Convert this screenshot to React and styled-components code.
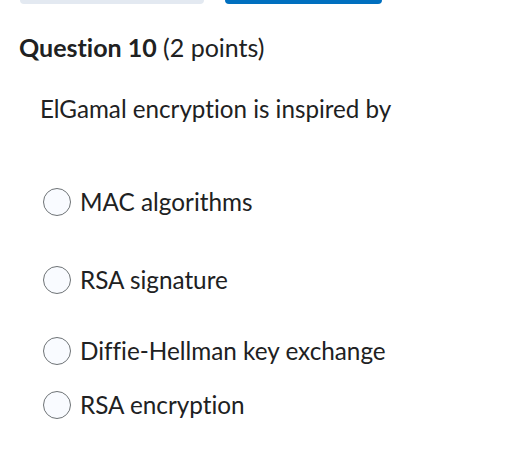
import React from "react";
import styled, { createGlobalStyle } from "styled-components";

const Global = createGlobalStyle`
  body {
    margin: 0;
    background: #ffffff;
    font-family: Lato, "Noto Sans", sans-serif;
    color: #202122;
    font-variant-ligatures: none;
  }
`;

const Page = styled.div`
  width: 525px;
  height: 456px;
  overflow: hidden;
`;

const ButtonRow = styled.div`
  display: flex;
  gap: 21px;
  padding-left: 20px;
`;

const TopButton = styled.div`
  width: ${(p) => p.w}px;
  height: 4px;
  background: ${(p) => (p.primary ? "#006fbf" : "#e3e9f1")};
  border-radius: 0 0 6px 6px;
`;

const Title = styled.h2`
  margin: 27px 0 0 19px;
  font-size: 25px;
  line-height: 32px;
  font-weight: 400;
  b {
    font-weight: 700;
  }
`;

const Prompt = styled.p`
  margin: 30px 0 0 40px;
  font-size: 24.2px;
  line-height: 32px;
`;

const Options = styled.div`
  display: flex;
  flex-direction: column;
  padding-left: 43px;
  margin-top: ${(p) => p.top}px;
`;

const Option = styled.label`
  display: flex;
  align-items: center;
  gap: 9px;
  font-size: 24.3px;
  line-height: 32px;
  margin-top: ${(p) => p.gap || 0}px;
`;

const Radio = styled.span`
  width: 28px;
  height: 28px;
  border-radius: 50%;
  border: 1.5px solid #6e7376;
  background: #f9fbff;
  box-sizing: border-box;
  flex: none;
`;

const answers = [
  { text: "MAC algorithms", gap: 0 },
  { text: "RSA signature", gap: 46 },
  { text: "Diffie-Hellman key exchange", gap: 39 },
  { text: "RSA encryption", gap: 22 },
];

export default function App() {
  return (
    <Page>
      <Global />
      <ButtonRow>
        <TopButton w={184} />
        <TopButton w={157} primary />
      </ButtonRow>
      <Title>
        <b>Question 10</b> (2 points)
      </Title>
      <Prompt>ElGamal encryption is inspired by</Prompt>
      <Options top={61}>
        {answers.map((a) => (
          <Option key={a.text} gap={a.gap}>
            <Radio />
            {a.text}
          </Option>
        ))}
      </Options>
    </Page>
  );
}
